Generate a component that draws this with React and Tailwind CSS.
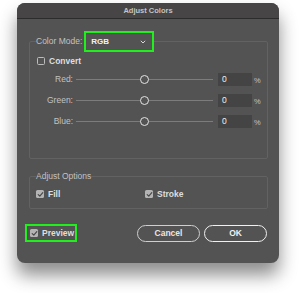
import React from "react";

const font = { fontFamily: '"Liberation Sans", Arial, sans-serif' };

function Check({ checked }) {
  if (checked) {
    return (
      <span className="flex h-[8px] w-[8px] items-center justify-center rounded-[1.5px] bg-[#b4b4b4]">
        <svg width="7" height="7" viewBox="0 0 7 7">
          <path d="M1.2 3.6 L2.8 5.2 L5.8 1.6" fill="none" stroke="#4a4a4a" strokeWidth="1.2" strokeLinecap="round" strokeLinejoin="round" />
        </svg>
      </span>
    );
  }
  return <span className="block h-[8px] w-[8px] rounded-[1.5px] border border-[#bcbcbc]" />;
}

function SliderRow({ label }) {
  return (
    <div className="flex h-[21px] items-center">
      <span className="w-[43px] text-right text-[8.5px] text-[#c2c2c2]">{label}</span>
      <div className="relative ml-[3px] flex h-[9px] w-[137px] items-center">
        <div className="h-[1.5px] w-full bg-[#7c7c7c]" />
        <span className="absolute left-[64px] top-0 h-[9px] w-[9px] rounded-full border-[1.5px] border-[#e4e4e4] bg-[#535353]" />
      </div>
      <div className="ml-[5px] flex h-[13px] w-[34px] items-center bg-[#444444] pl-[4px] text-[8.5px] text-[#f0f0f0]">0</div>
      <span className="ml-[2px] mt-[3px] text-[7.5px] text-[#c2c2c2]">%</span>
    </div>
  );
}

export default function App() {
  return (
    <div className="h-[293px] w-[300px] bg-white pl-[17px] pt-[3px]" style={font}>
      <div className="flex h-[260px] w-[262px] flex-col overflow-hidden rounded-[8px] bg-[#535353] shadow-[0_12px_18px_rgba(0,0,0,0.45)]">
        <div className="flex h-[16px] shrink-0 items-center justify-center border-b border-[#2c2c2c] bg-[#474546] text-[7.5px] font-bold text-[#c4c4c4]">
          Adjust Colors
        </div>

        <fieldset className="mx-[12px] mt-[12px] w-[239px] rounded-[2px] border border-[#626262] pb-[26px]">
          <legend className="ml-[6px] flex items-center">
            <span className="text-[8.5px] text-[#c2c2c2]">Color Mode:</span>
            <div className="ml-[2px] flex h-[21px] w-[70px] items-center justify-between border-2 border-[#22ee1e] pl-[5px] pr-[6px]">
              <span className="text-[8px] font-bold text-[#f2f2f2]">RGB</span>
              <svg width="6" height="4" viewBox="0 0 6 4">
                <path d="M0.8 0.8 L3 3 L5.2 0.8" fill="none" stroke="#d8d8d8" strokeWidth="1" />
              </svg>
            </div>
          </legend>
          <div className="flex h-[17px] items-center pl-[7px] pt-[1px]">
            <Check checked={false} />
            <span className="ml-[4px] text-[8.5px] font-bold text-[#dedede]">Convert</span>
          </div>
          <SliderRow label="Red:" />
          <SliderRow label="Green:" />
          <SliderRow label="Blue:" />
        </fieldset>

        <fieldset className="mx-[12px] mt-[10px] w-[239px] rounded-[2px] border border-[#626262] pb-[4px]">
          <legend className="ml-[6px] text-[8.5px] leading-[14px] text-[#c2c2c2]">Adjust Options</legend>
          <div className="flex h-[21px] items-center pl-[6px] pt-[1px]">
            <div className="flex w-[109px] items-center">
              <Check checked />
              <span className="ml-[4px] text-[8.5px] font-bold text-[#dedede]">Fill</span>
            </div>
            <div className="flex items-center">
              <Check checked />
              <span className="ml-[4px] text-[8.5px] font-bold text-[#dedede]">Stroke</span>
            </div>
          </div>
        </fieldset>

        <div className="mt-[15px] flex h-[18px] items-center pl-[8px] pr-[12px]">
          <div className="flex h-[18px] w-[52px] items-center border-2 border-[#22ee1e] pl-[3px]">
            <Check checked />
            <span className="ml-[4px] text-[8.5px] font-bold text-[#dedede]">Preview</span>
          </div>
          <div className="ml-auto flex items-center gap-[4px]">
            <button className="flex h-[17px] w-[63px] items-center justify-center rounded-full border border-[#cfcfcf] text-[8.5px] font-bold text-[#e6e6e6]">
              Cancel
            </button>
            <button className="flex h-[17px] w-[63px] items-center justify-center rounded-full border-[1.5px] border-[#f0f0f0] text-[8.5px] font-bold text-[#f0f0f0]">
              OK
            </button>
          </div>
        </div>
      </div>
    </div>
  );
}
